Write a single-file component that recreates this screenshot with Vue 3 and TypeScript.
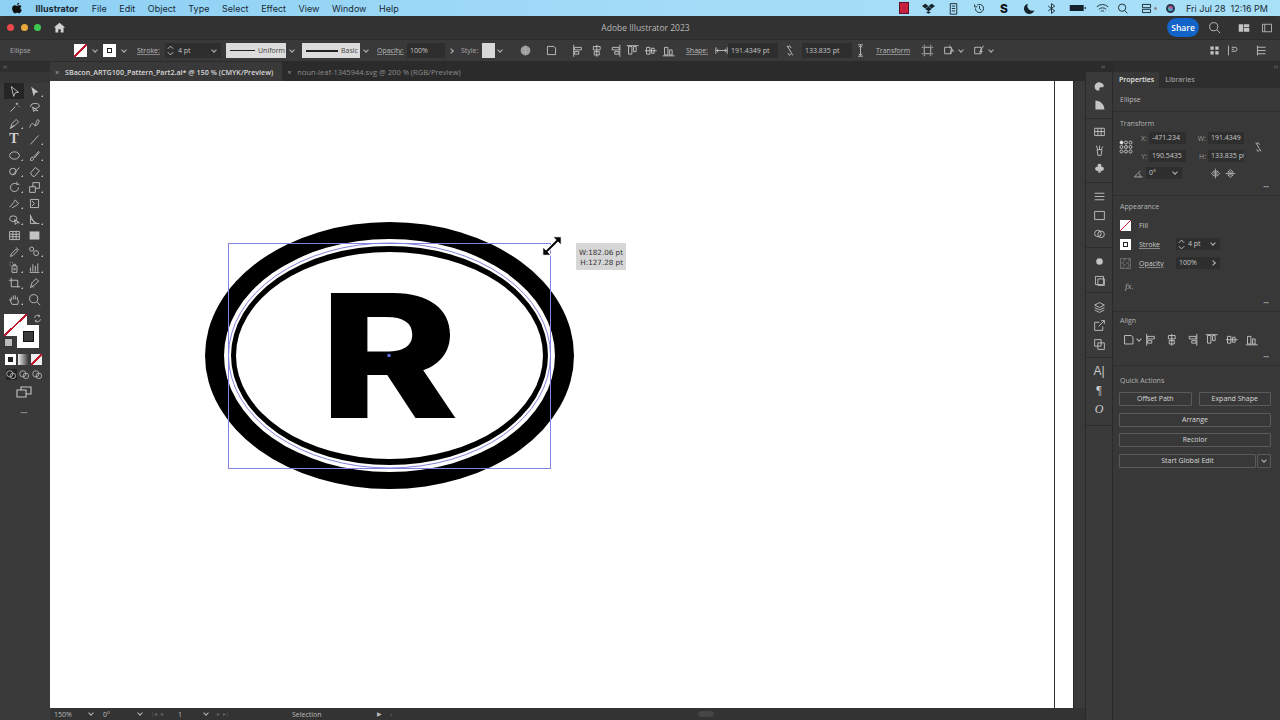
<script setup lang="ts">
interface Icon {
  d: string
  solid?: boolean
  corner?: boolean
}

const icons: Record<string, string> = {
  arrow: 'M4 2l9 7-4 .5L7 14z',
  wand: 'M3 13l6-6M11 2v3M9.5 3.5h3M13 6l1 1',
  lasso: 'M3 7c0-3 3-4 6-4s5 1 5 3-3 3-5 3-4 0-4-2M6 8l1 5 2-2 3 1z',
  pen: 'M3 14l2-6 5-5 3 3-5 5zM3 14l4-4',
  curve: 'M2 13c2-5 3-6 5-4s3 0 3-3l2-3 2 2-3 5-3 1',
  line: 'M3 14L13 3',
  ellipse: 'M2 8a6 4.5 0 1 0 12 0a6 4.5 0 1 0-12 0',
  brush: 'M3 14c0-3 1-4 3-4l1 2c0 2-2 2-4 2zM7 10l6-7 1 1-6 7',
  shaper: 'M2 8a4 4 0 1 0 8 0a4 4 0 1 0-8 0M6 12l8-9',
  eraser: 'M3 10l6-7 5 4-6 7H6z',
  rotate: 'M13 8a5 5 0 1 1-2-4M11 1v3h3',
  scale: 'M2 7h7v7H2zM6 7V2h8v7H9',
  warp: 'M2 12c2 0 2-3 4-4s1-4 3-4 1 3 3 3-1 4-3 4-2 3-4 2',
  free: 'M3 3h10v10H3zM5 5l3 3-3 3',
  shape: 'M2 7a4.500 3.500 0 1 0 9 0a4.500 3.500 0 1 0-9 0M8 8l1 6 2-2 3 0z',
  persp: 'M3 2v11h11M3 7l8 6M3 3l5 10',
  mesh: 'M2 3h12v10H2zM2 6.500h12M2 9.500h12M6 3v10M10 3v10',
  gradient: 'M2 3h12v10H2z',
  eyedrop: 'M3 14l1-3 6-6 2 2-6 6zM10 3l3 3',
  blend: 'M2 5a2.500 2.500 0 1 0 5 0a2.500 2.500 0 1 0-5 0M7 10a3 3 0 1 0 6 0a3 3 0 1 0-6 0',
  symbol: 'M5 6h6v8H5zM7 6V4h2v2M2 2h1M5 2h1M2 5h1M7 10a1 1 0 1 0 2 0a1 1 0 1 0-2 0',
  chart: 'M2 14h12M3 8v5M6 4v9M9 6v7M12 3v10',
  crop: 'M4 1v11h11M1 4h11v9',
  knife: 'M3 13l2-6 5-5 3 3-5 5zM5 11l2 2',
  hand: 'M4 9V5M6.500 8V3M9 8V3M11.500 9V5M4 9l-2-1 3 6h7l1-5',
  zoom: 'M2 7a5 5 0 1 0 10 0a5 5 0 1 0-10 0M10.500 10.500L15 15',
}

const tools: Icon[] = [
  { d: icons.arrow },
  { d: icons.arrow, solid: true, corner: true },
  { d: icons.wand },
  { d: icons.lasso },
  { d: icons.pen, corner: true },
  { d: icons.curve },
  { d: 'T' },
  { d: icons.line, corner: true },
  { d: icons.ellipse, corner: true },
  { d: icons.brush, corner: true },
  { d: icons.shaper, corner: true },
  { d: icons.eraser, corner: true },
  { d: icons.rotate, corner: true },
  { d: icons.scale, corner: true },
  { d: icons.warp, corner: true },
  { d: icons.free },
  { d: icons.shape, corner: true },
  { d: icons.persp, corner: true },
  { d: icons.mesh },
  { d: icons.gradient, solid: true },
  { d: icons.eyedrop, corner: true },
  { d: icons.blend, corner: true },
  { d: icons.symbol, corner: true },
  { d: icons.chart, corner: true },
  { d: icons.crop, corner: true },
  { d: icons.knife },
  { d: icons.hand, corner: true },
  { d: icons.zoom },
]

const menus = ['File', 'Edit', 'Object', 'Type', 'Select', 'Effect', 'View', 'Window', 'Help']

const alignPaths = [
  'M2 1v14M3 4h8v3H3zM3 9h5v3H3z',
  'M8 1v14M4 3h8v4H4zM5 9h6v4H5z',
  'M14 1v14M5 4h8v3H5zM8 9h5v3H8z',
  'M1 2h14M3 3h4v9H3zM9 3h3v6H9z',
  'M1 8h14M3 4h4v8H3zM9 5h3v6H9z',
  'M1 14h14M3 4h4v9H3zM9 7h3v6H9z',
]

const dockGroups: Icon[][] = [
  [
    { d: 'M2 8c0-4 4-6 7-5s5 3 4 5-4 0-5 2 1 3-1 3-5-1-5-5z', solid: true },
    { d: 'M3 3v11h11C14 8 9 3 3 3z', solid: true },
  ],
  [
    { d: 'M2 4h12v9H2zM2 8h12M6 4v9M10 4v9' },
    { d: 'M5 7h6l-1 7H6zM6 7l-2-5M8 7V2M10 7l2-4' },
    { d: 'M8 2a2.500 2.500 0 0 1 2 4a2.500 2.500 0 1 1-1 4l1 3H6l1-3a2.500 2.500 0 1 1-1-4a2.500 2.500 0 0 1 2-4z', solid: true },
  ],
  [
    { d: 'M2 4h12M2 8h12M2 12h12' },
    { d: 'M2 3h12v10H2z' },
    { d: 'M2 8a4 4 0 1 0 8 0a4 4 0 1 0-8 0M6 9a4 4 0 1 0 8 0a4 4 0 1 0-8 0' },
  ],
  [
    { d: 'M4 8a4 4 0 1 0 8 0a4 4 0 1 0-8 0z', solid: true },
    { d: 'M3 3h10v10H3zM6 6h8v8H6z' },
  ],
  [
    { d: 'M8 2l6 3-6 3-6-3zM2 8l6 3 6-3M2 11l6 3 6-3' },
    { d: 'M2 4h6M2 4v10h10V9M7 9l7-7M10 2h4v4' },
    { d: 'M2 2h8v8H2zM6 6h8v8H6z' },
  ],
]

const dockText = [
  { label: 'A|', cls: 'dock-a' },
  { label: '¶', cls: 'dock-p' },
  { label: 'O', cls: 'dock-o' },
]

// 3x3 reference point grid on the Transform section
const refDots = [0, 1, 2, 3, 4, 5, 6, 7, 8].map((n) => ({
  cx: 2.5 + (n % 3) * 4.5,
  cy: 2.5 + Math.floor(n / 3) * 4.5,
  on: n === 0,
}))
</script>

<template>
  <div class="app">
    <header class="menubar">
      <svg class="apple" viewBox="0 0 16 16"><path d="M11 1c0 2-1.500 3-3 3 0-2 1.500-3 3-3zM8 5c1 0 2-1 3.500-.8 1 .1 2 .6 2.500 1.500-2 1.200-1.800 4 .4 5-.6 1.800-2 4.300-3.400 4.300-1 0-1.500-.7-2.700-.7s-1.700.7-2.700.7C3.500 15 1.500 11 1.500 8.500 1.500 5.800 3.300 4.200 5 4.200 6.200 4.200 7 5 8 5z" /></svg>
      <strong class="app-name">Illustrator</strong>
      <span v-for="m in menus" :key="m" class="menu">{{ m }}</span>
      <div class="status-icons">
        <i class="red-app"></i>
        <svg viewBox="0 0 16 16"><path class="k" d="M4 2l4 3-4 3-4-3zM12 2l4 3-4 3-4-3zM4 8.500l4 3 4-3-4-3zM5 12.500l3 2 3-2-3-1z" /></svg>
        <svg viewBox="0 0 16 16"><path class="ks" d="M4 2h8v13H4zM6 5h4M6 8h4M6 11h4" /></svg>
        <svg viewBox="0 0 16 16"><path class="ks" d="M3 8a5 5 0 1 0 2-4M8 5v3l2 2M2 3v3h3" /></svg>
        <b class="s-glyph">S</b>
        <svg viewBox="0 0 16 16"><path class="k" d="M6 2a6.500 6.500 0 1 0 8 8A6 6 0 0 1 6 2z" /></svg>
        <svg class="bt" viewBox="0 0 16 16"><path class="ks" d="M4 5l8 6-4 3V2l4 3-8 6" /></svg>
        <svg class="wide" viewBox="0 0 22 12"><path class="k" d="M1 2h18v8H1zM20 5h2v2h-2z" /></svg>
        <svg class="wifi" viewBox="0 0 16 16"><path class="ks" d="M1 6a10 10 0 0 1 14 0M3.500 9a6.500 6.500 0 0 1 9 0M6 11.500a3 3 0 0 1 4 0" /></svg>
        <svg class="find" viewBox="0 0 16 16"><path class="ks" d="M3 7a4.500 4.500 0 1 0 9 0a4.500 4.500 0 1 0-9 0M10.500 10.500L14 14" /></svg>
        <svg class="ctl" viewBox="0 0 16 16"><path class="ks" d="M3 3h10v4H3zM3 9h10v4H3z" /></svg>
        <i class="dot"></i>
        <i class="siri"></i>
        <span class="clock">Fri Jul 28&nbsp; 12:16 PM</span>
      </div>
    </header>

    <div class="titlebar">
      <i class="light l-red"></i>
      <i class="light l-yellow"></i>
      <i class="light l-green"></i>
      <svg class="home" viewBox="0 0 16 16"><path d="M8 2l7 6h-2v6H9.500v-4h-3v4H3V8H1z" /></svg>
      <span class="title">Adobe Illustrator 2023</span>
      <span class="share">Share</span>
      <svg class="tb-icon search" viewBox="0 0 16 16"><path d="M2 7a5 5 0 1 0 10 0a5 5 0 1 0-10 0M10.500 10.500L15 15" /></svg>
      <svg class="tb-icon layout" viewBox="0 0 16 16"><path class="filled" d="M1 3h6v10H1zM8 3h7v4H8zM8 8h7v5H8z" /></svg>
      <svg class="tb-icon last" viewBox="0 0 16 16"><path d="M2 3h12v10H2zM5 3v10" /></svg>
    </div>

    <div class="controlbar">
      <span class="lbl ell">Ellipse</span>
      <i class="swatch none"></i><span class="chev"></span>
      <i class="swatch stroke-sw"><u></u></i><span class="chev"></span>
      <span class="lbl ul stroke-lbl">Stroke:</span>
      <span class="field stroke-field">
        <svg class="spin" viewBox="0 0 8 12"><path d="M1 4l3-3 3 3M1 8l3 3 3-3" /></svg>4 pt<span class="chev end"></span>
      </span>
      <span class="line-pick uniform"><i></i>Uniform</span><span class="chev"></span>
      <span class="line-pick basic"><i class="thick"></i>Basic</span><span class="chev"></span>
      <span class="lbl ul op-lbl">Opacity:</span>
      <span class="field op-field">100%</span>
      <span class="chev gt"></span>
      <span class="lbl style-lbl">Style:</span>
      <i class="style-sw"></i><span class="chev"></span>
      <svg class="ci globe" viewBox="0 0 16 16"><circle cx="8" cy="8" r="6" fill="#9a9a9a" /><path d="M3 6h10M3 10h10M8 2v12" stroke-dasharray="1 1" /></svg>
      <svg class="ci artboard" viewBox="0 0 16 16"><path d="M3 3h8l2 2v8H3z" /></svg>
      <svg v-for="(p, i) in alignPaths" :key="i" class="ci al" viewBox="0 0 16 16"><path :d="p" /></svg>
      <span class="lbl ul shape-lbl">Shape:</span>
      <svg class="ci wh" viewBox="0 0 16 16"><path d="M1 4v8M15 4v8M2 8h12M4 6L2 8l2 2M12 6l2 2-2 2" /></svg>
      <span class="field dim-field">191.4349 pt</span>
      <svg class="ci link" viewBox="0 0 16 16"><path d="M5 2l7 12M6 4l2-2 2 3M10 12l-2 2-2-3" /></svg>
      <span class="field dim-field">133.835 pt</span>
      <svg class="ci hh" viewBox="0 0 16 16"><path d="M5 1h6M5 15h6M8 2v12M6 4l2-2 2 2M6 12l2 2 2-2" /></svg>
      <span class="lbl ul tf-lbl">Transform</span>
      <svg class="ci t1" viewBox="0 0 16 16"><path d="M4 4h8v8H4zM1 4h2M1 12h2M13 4h2M13 12h2M4 1v2M12 1v2M4 13v2M12 13v2" /></svg>
      <svg class="ci t2" viewBox="0 0 16 16"><path d="M2 4h8v8H2zM8 2l5 7-3-1-1 4" /></svg>
      <span class="chev"></span>
      <svg class="ci t3" viewBox="0 0 16 16"><path d="M2 4h8v8H2zM13 2l-5 8 4-1" /></svg>
      <span class="chev"></span>
      <svg class="ci r1" viewBox="0 0 16 16"><path class="filled" d="M3 3h4v4H3zM9 3h4v4H9zM3 9h4v4H3zM9 9h4v4H9z" /></svg>
      <svg class="ci r2" viewBox="0 0 16 16"><path d="M3 2v12M7 4h4a2.500 2.500 0 0 1 0 5H7M7 6.500h3" /></svg>
      <svg class="ci r3" viewBox="0 0 16 16"><path d="M3 4h10M3 8h10M3 12h10M3 2v12" /></svg>
    </div>

    <main class="workspace">
      <aside class="toolbar">
        <div class="collapse">‹‹</div>
        <div class="grip"></div>
        <div class="tool-grid">
          <div v-for="(t, i) in tools" :key="i" class="tool" :class="{ active: i === 0 }">
            <span v-if="t.d === 'T'" class="tool-t">T</span>
            <svg v-else viewBox="0 0 16 16"><path :d="t.d" :class="{ filled: t.solid }" /></svg>
            <i v-if="t.corner" class="corner"></i>
          </div>
        </div>
        <div class="fill-stroke">
          <i class="big-fill"></i>
          <i class="big-stroke"><u></u></i>
          <svg class="swap" viewBox="0 0 12 12"><path d="M2 5a4 4 0 0 1 7-2M8 1l1 2-2 1M10 7a4 4 0 0 1-7 2M4 11L3 9l2-1" /></svg>
          <i class="mini-default"></i>
        </div>
        <div class="mode-row">
          <i class="mode m-solid"></i><i class="mode m-grad"></i><i class="mode m-none"></i>
        </div>
        <div class="draw-row">
          <svg v-for="n in 3" :key="n" class="draw" :class="{ sel: n === 1 }" viewBox="0 0 16 16"><path d="M1 7a4.500 4.500 0 1 0 9 0a4.500 4.500 0 1 0-9 0M6 10a4 4 0 1 0 8 0a4 4 0 1 0-8 0" /></svg>
        </div>
        <svg class="screen" viewBox="0 0 16 16"><path d="M1 6h9v7H1zM5 6V3h10v7h-5" /></svg>
        <div class="more">•••</div>
      </aside>

      <section class="center">
        <nav class="tabs">
          <div class="tab on"><span class="x">×</span>SBacon_ARTG100_Pattern_Part2.ai* @ 150 % (CMYK/Preview)</div>
          <div class="tab"><span class="x">×</span>noun-leaf-1345944.svg @ 200 % (RGB/Preview)</div>
        </nav>
        <div class="canvas-row">
          <div class="canvas">
            <svg class="art" viewBox="50 81 1023 627" width="1023" height="627">
              <line x1="1054.500" y1="81" x2="1054.500" y2="708" stroke="#333" />
              <ellipse cx="389.500" cy="355.500" rx="184.500" ry="133.500" fill="#000" />
              <ellipse cx="389.500" cy="355.500" rx="165.500" ry="116.500" fill="#fff" />
              <ellipse cx="389.500" cy="355.500" rx="158.500" ry="109.500" fill="#000" />
              <ellipse cx="389.500" cy="355.500" rx="153.500" ry="103.500" fill="#fff" />
              <text x="319" y="418" class="big-r" textLength="140" lengthAdjust="spacingAndGlyphs">R</text>
              <ellipse cx="389.500" cy="355.500" rx="161" ry="112.500" fill="none" stroke="#8282dc" />
              <rect x="228.500" y="243.500" width="322" height="225" fill="none" stroke="#8282e0" />
              <circle cx="389" cy="355.500" r="1.800" fill="#5a6ee0" />
              <g transform="translate(552 246) rotate(-45)">
                <path class="cursor" d="M-13 0l6-6v4.500H7V-6l6 6-6 6V1.500H-7V6z" />
              </g>
            </svg>
            <div class="measure">W:182.06 pt<br />H:127.28 pt</div>
          </div>
          <div class="vscroll"></div>
        </div>
        <footer class="statusbar">
          <span class="st zoom">150%</span><span class="chev"></span>
          <span class="st angle">0°</span><span class="chev"></span>
          <span class="st nav nav1">|◂ &nbsp;◂</span>
          <span class="st page">1</span><span class="chev"></span>
          <span class="st nav nav2">▸ &nbsp;▸|</span>
          <span class="st mode-name">Selection</span>
          <span class="st play">▶</span>
          <span class="st back">‹</span>
          <i class="hthumb"></i>
        </footer>
      </section>

      <aside class="dock">
        <div class="dock-top">‹‹</div>
        <div v-for="(g, i) in dockGroups" :key="i" class="dock-group">
          <svg v-for="(ic, j) in g" :key="j" viewBox="0 0 16 16"><path :d="ic.d" :class="{ filled: ic.solid }" /></svg>
        </div>
        <div class="dock-group texts">
          <span v-for="t in dockText" :key="t.label" :class="t.cls">{{ t.label }}</span>
        </div>
      </aside>

      <aside class="panel">
        <div class="panel-tabs">
          <span class="ptab on">Properties</span>
          <span class="ptab">Libraries</span>
          <span class="pcollapse">››</span>
        </div>
        <div class="sec kind">Ellipse</div>

        <section class="sec transform">
          <h4>Transform</h4>
          <div class="tf-main">
            <svg class="refpoint" viewBox="0 0 14 14">
              <circle v-for="(c, i) in refDots" :key="i" :cx="c.cx" :cy="c.cy" r="1.500" :fill="c.on ? '#eee' : 'none'" stroke="#d8d8d8" stroke-width=".8" />
            </svg>
            <div class="tf-grid">
              <label>X:</label><span class="inp">-471.234</span>
              <label>W:</label><span class="inp">191.4349</span>
              <label>Y:</label><span class="inp">190.5435</span>
              <label>H:</label><span class="inp">133.835 pt</span>
            </div>
            <svg class="plink" viewBox="0 0 16 16"><path d="M5 2l7 12M6 4l2-2 2 3M10 12l-2 2-2-3" /></svg>
          </div>
          <div class="angle-row">
            <svg viewBox="0 0 16 16"><path d="M2 13h12M2 13L11 4M9 8a5 5 0 0 1 1 5" /></svg>
            <span class="inp angle-inp">0°<b class="chev end"></b></span>
            <svg class="flip" viewBox="0 0 16 16"><path d="M8 1v14M6 4l-4 4 4 4zM10 4l4 4-4 4z" /></svg>
            <svg class="flip2" viewBox="0 0 16 16"><path d="M1 8h14M4 6l4-4 4 4zM4 10l4 4 4-4z" /></svg>
          </div>
          <div class="dots">•••</div>
        </section>

        <section class="sec appearance">
          <h4>Appearance</h4>
          <div class="ap-row"><i class="pswatch none"></i><span>Fill</span></div>
          <div class="ap-row">
            <i class="pswatch stroke-sw"><u></u></i><span class="ul ap-lbl">Stroke</span>
            <span class="inp st-inp">
              <svg class="spin" viewBox="0 0 8 12"><path d="M1 4l3-3 3 3M1 8l3 3 3-3" /></svg>4 pt<b class="chev end"></b>
            </span>
          </div>
          <div class="ap-row">
            <i class="pswatch check"></i><span class="ul ap-lbl">Opacity</span>
            <span class="inp op-inp">100%<b class="chev end gt"></b></span>
          </div>
          <div class="fx">fx.</div>
          <div class="dots">•••</div>
        </section>

        <section class="sec align">
          <h4>Align</h4>
          <div class="align-row">
            <svg class="art-ic" viewBox="0 0 16 16"><path d="M3 3h8l2 2v8H3z" /></svg>
            <span class="chev tiny"></span>
            <svg v-for="(p, i) in alignPaths" :key="i" viewBox="0 0 16 16"><path :d="p" /></svg>
          </div>
          <div class="dots">•••</div>
        </section>

        <section class="sec quick">
          <h4>Quick Actions</h4>
          <div class="btn-grid">
            <span class="btn">Offset Path</span>
            <span class="btn">Expand Shape</span>
            <span class="btn span2">Arrange</span>
            <span class="btn span2">Recolor</span>
            <div class="span2 split">
              <span class="btn grow">Start Global Edit</span>
              <span class="btn caret"><b class="chev"></b></span>
            </div>
          </div>
        </section>
      </aside>
    </main>
  </div>
</template>

<style>
html, body { margin: 0; background: #333; }
</style>

<style scoped>
.app {
  width: 1280px;
  height: 720px;
  overflow: hidden;
  display: flex;
  flex-direction: column;
  background: #383838;
  color: #c8c8c8;
  font-family: "Open Sans", "Liberation Sans", sans-serif;
  font-size: 7px;
}
i, em { display: block; font-style: normal; }
svg { display: block; }
svg path { fill: none; stroke: #c4c4c4; stroke-width: 1.1; }
svg path.filled { fill: #c4c4c4; stroke: none; }

/* mac menu bar */
.menubar {
  height: 16px;
  flex: none;
  display: flex;
  align-items: center;
  gap: 12.600px;
  padding-left: 11px;
  background: linear-gradient(90deg, #8ed0f4, #a4dcf8 55%, #a8e0f8);
  color: #1a2a34;
  font-family: Inter, "Liberation Sans", sans-serif;
  font-size: 9px;
}
.apple { width: 12px; height: 12px; }
.apple path { fill: #111; stroke: none; }
.app-name { font-size: 9px; font-weight: 700; margin-right: 1px; }
.status-icons {
  margin-left: auto;
  display: flex;
  align-items: center;
  gap: 12.500px;
  padding-right: 12px;
}
.status-icons svg { width: 13px; height: 13px; }
.status-icons svg.wide { width: 17px; height: 10px; margin: 0 -2px; }
.status-icons path.k { fill: #16222a; stroke: none; }
.status-icons path.ks { stroke: #16222a; }
.status-icons .bt { margin-left: -3px; }
.status-icons .find { margin-left: -6px; }
.status-icons .ctl { margin-left: -1.500px; }
.red-app { width: 10px; height: 12px; background: #c8203c; border: 1px solid #5a1020; box-sizing: border-box; }
.s-glyph { font-size: 12px; font-weight: 800; color: #111; width: 12px; text-align: center; }
.dot { width: 3px; height: 3px; border-radius: 50%; background: #888; margin-left: -11.500px; }
.siri { width: 9px; height: 9px; border-radius: 50%; background: conic-gradient(#e0457a, #5a8ae6, #43c6c6, #e0457a); border: 2px solid #26384a; box-sizing: border-box; margin-left: -3.500px; }
.clock { font-size: 9px; margin-left: -1px; white-space: nowrap; }

/* app title */
.titlebar {
  height: 24px;
  flex: none;
  display: flex;
  align-items: center;
  background: #323232;
  border-radius: 5px 5px 0 0;
  padding-left: 7px;
  border-bottom: 1px solid #2a2a2a;
  box-sizing: border-box;
}
.light { width: 7px; height: 7px; border-radius: 50%; margin-right: 6.500px; }
.l-red { background: #e8484a; }
.l-yellow { background: #e8a83c; }
.l-green { background: #3cc850; }
.home { width: 13px; height: 13px; margin-left: 5px; }
.home path { fill: #d0d0d0; stroke: none; }
.title {
  margin-left: 530px;
  width: 100px;
  text-align: center;
  font-size: 8.500px;
  color: #b8b8b8;
  white-space: nowrap;
}
.share {
  margin-left: 471.500px;
  width: 32px;
  height: 19px;
  line-height: 19px;
  text-align: center;
  border-radius: 10px;
  background: #1264c8;
  color: #fff;
  font-size: 8.500px;
  font-weight: 600;
}
.tb-icon { width: 12px; height: 12px; }
.tb-icon.search { width: 13px; height: 13px; margin-left: 8.500px; }
.tb-icon.layout { margin-left: 17.500px; }
.tb-icon.last { margin-left: 11px; }

/* control bar */
.controlbar {
  height: 22px;
  flex: none;
  display: flex;
  align-items: center;
  background: #393939;
  border-bottom: 1px solid #2b2b2b;
  box-sizing: border-box;
  white-space: nowrap;
}
.lbl { color: #bdbdbd; flex: none; }
.ul { text-decoration: underline; text-decoration-color: #888; text-underline-offset: 1px; }
.ell { margin-left: 10px; width: 64px; color: #a8a8a8; }
.chev { display: flex; align-items: center; justify-content: center; width: 10px; height: 8px; flex: none; }
.chev::before {
  content: "";
  display: block;
  width: 3px;
  height: 3px;
  margin-top: -2px;
  border-right: 1px solid #b8b8b8;
  border-bottom: 1px solid #b8b8b8;
  transform: rotate(45deg);
}
.chev.gt::before { transform: rotate(-45deg); margin-top: 0; }
.chev.end { position: absolute; right: 2px; top: 2px; }
.swatch { width: 13px; height: 13px; background: #fff; margin-right: 3px; flex: none; position: relative; }
.swatch.none, .pswatch.none { background: linear-gradient(to top left, #fff 46%, #c01830 46%, #c01830 54%, #fff 54%); }
.swatch.stroke-sw { margin-left: 3px; }
.stroke-sw { display: flex; align-items: center; justify-content: center; }
.stroke-sw u { display: block; width: 3px; height: 3px; border: 1px solid #222; }
.stroke-lbl { margin-left: 8px; width: 28px; }
.field { background: #2e2e2e; height: 15px; line-height: 15px; color: #c4c4c4; position: relative; flex: none; box-sizing: border-box; display: flex; align-items: center; }
.field .chev.end { top: 4px; }
.spin { width: 7px; height: 11px; margin-right: 4px; flex: none; }
.stroke-field { width: 56px; padding-left: 2px; }
.line-pick {
  background: #dcdcdc;
  color: #444;
  height: 15px;
  margin-left: 5px;
  display: flex;
  align-items: center;
  gap: 3px;
  padding-left: 4px;
  box-sizing: border-box;
  flex: none;
}
.line-pick i { width: 25px; height: 1px; background: #222; }
.line-pick i.thick { height: 2px; width: 32px; }
.uniform { width: 60px; margin-right: 1px; }
.basic { width: 58px; margin-right: 1px; }
.op-lbl { margin-left: 6px; width: 30px; }
.op-field { width: 38px; padding-left: 3px; }
.gt { margin-left: 1px; }
.style-lbl { margin-left: 5px; width: 21px; color: #a8a8a8; }
.style-sw { width: 13px; height: 15px; background: #d8d8d8; flex: none; }
.ci { width: 13px; height: 13px; flex: none; }
.globe { margin-left: 13.500px; }
.artboard { margin-left: 13px; margin-right: 9.500px; }
.al { margin-left: 4.500px; width: 13.500px; height: 13.500px; }
.shape-lbl { margin-left: 11px; width: 29px; }
.dim-field { width: 50px; padding-left: 3px; }
.link { margin: 0 6.500px 0 4.500px; }
.hh { margin-left: 1.500px; }
.tf-lbl { margin-left: 9.500px; width: 44.500px; }
.t1 { margin-right: 9px; }
.t3 { margin-left: 7px; }
.r1 { margin-left: 212px; }
.r2 { margin-left: 5px; }
.r3 { margin-left: 16px; }

/* main */
.workspace { flex: 1; display: flex; min-height: 0; }
.toolbar {
  width: 50px;
  flex: none;
  background: #3a3a3a;
  display: flex;
  flex-direction: column;
  align-items: center;
}
.collapse { height: 10px; line-height: 10px; width: 100%; padding-left: 3px; box-sizing: border-box; font-size: 7px; color: #888; background: #2e2e2e; }
.grip { height: 11px; width: 100%; background: #363636; }
.tool-grid { display: grid; grid-template-columns: 20px 20px; grid-auto-rows: 16px; margin-right: 2px; }
.tool { position: relative; display: flex; align-items: center; justify-content: center; }
.tool svg { width: 13px; height: 13px; }
.tool.active { background: #252525; }
.tool-t { font-family: "Liberation Serif", serif; font-size: 14px; font-weight: 700; color: #d0d0d0; }
.corner { position: absolute; right: 1px; bottom: 2px; width: 0; height: 0; border-left: 2px solid transparent; border-bottom: 2px solid #c4c4c4; }
.fill-stroke { position: relative; width: 40px; height: 38px; margin-top: 5px; align-self: flex-start; }
.big-fill { position: absolute; left: 4px; top: 2px; width: 23px; height: 22px; background: linear-gradient(to top left, #fff 47%, #c01830 47%, #c01830 53%, #fff 53%); }
.big-stroke { position: absolute; left: 17px; top: 13px; width: 22px; height: 23px; background: #fff; display: flex; align-items: center; justify-content: center; }
.big-stroke u { display: block; width: 9px; height: 9px; border: 1px solid #111; background: #3a3a3a; }
.swap { position: absolute; left: 33px; top: 2px; width: 9px; height: 9px; }
.mini-default { position: absolute; left: 4px; top: 26px; width: 7px; height: 7px; background: #bbb; border: 1px solid #333; }
.mode-row { display: flex; gap: 2px; margin-top: 4px; margin-right: 3px; }
.mode { width: 11px; height: 11px; }
.m-solid { background: #fff; border: 3px solid #fff; box-shadow: inset 0 0 0 3px #222; box-sizing: border-box; }
.m-grad { background: linear-gradient(90deg, #eee, #333); }
.m-none { background: linear-gradient(to top left, #eee 44%, #c01830 44%, #c01830 56%, #eee 56%); }
.draw-row { display: flex; gap: 2px; margin-top: 4px; margin-right: 2px; }
.draw { width: 11px; height: 11px; }
.draw.sel { background: #252525; }
.screen { width: 16px; height: 16px; margin-top: 4px; margin-right: 2px; }
.more { font-size: 6px; color: #bbb; margin-top: 9px; margin-right: 2px; }

.center { flex: 1; min-width: 0; display: flex; flex-direction: column; }
.tabs { height: 19px; flex: none; display: flex; background: #2b2b2b; }
.tab {
  display: flex;
  align-items: center;
  font-size: 7.550px;
  color: #8c8c8c;
  padding-right: 9px;
  white-space: nowrap;
}
.tab.on { background: #393939; color: #d8d8d8; font-weight: 600; font-size: 7.150px; }
.x { width: 15px; padding-left: 5px; box-sizing: border-box; color: #999; }
.canvas-row { flex: 1; display: flex; min-height: 0; }
.canvas { width: 1023px; background: #fff; position: relative; overflow: hidden; }
.art { position: absolute; left: 0; top: 0; }
.cursor { fill: #000; stroke: #fff; stroke-width: 1; }
.big-r { font-family: Inter, "Liberation Sans", sans-serif; font-size: 172px; font-weight: 800; fill: #000; }
.measure {
  position: absolute;
  left: 526px;
  top: 162px;
  width: 50px;
  height: 27px;
  box-sizing: border-box;
  padding: 5px 3px 0 0;
  background: #d6d6d6;
  border-radius: 1px;
  color: #333;
  text-align: right;
  font-family: "DejaVu Sans", sans-serif;
  font-size: 7.200px;
  line-height: 10px;
  white-space: nowrap;
}
.vscroll { flex: 1; background: #3a3a3a; border-left: 1px solid #2a2a2a; }
.statusbar {
  height: 12px;
  flex: none;
  display: flex;
  align-items: center;
  background: #333;
  color: #bbb;
  position: relative;
}
.st { flex: none; }
.zoom { margin-left: 4px; width: 32px; }
.angle { margin-left: 7px; width: 32px; }
.nav { color: #666; font-size: 6px; }
.nav1 { width: 25px; margin-left: 6px; }
.nav2 { width: 20px; margin-left: 6px; }
.page { width: 23px; margin-left: 2px; }
.mode-name { margin-left: 55px; width: 85px; }
.play { font-size: 6px; width: 6px; }
.back { margin-left: 7px; color: #777; }
.hthumb { position: absolute; left: 648px; top: 3px; width: 16px; height: 6px; border-radius: 3px; background: #454545; }

/* right dock */
.dock { width: 27px; flex: none; background: #3a3a3a; border-left: 1px solid #2a2a2a; box-sizing: border-box; }
.dock-top { height: 10px; line-height: 10px; font-size: 7px; color: #888; padding-left: 15px; background: #2b2b2b; }
.dock-group { display: flex; flex-direction: column; align-items: center; gap: 5.500px; padding: 7.500px 0 6.500px; border-bottom: 1px solid #2c2c2c; }
.dock-group svg { width: 13px; height: 13px; }
.dock-group:nth-child(3) { padding-top: 6.500px; }
.dock-group:nth-child(5) { padding-bottom: 5.500px; }
.texts { font-family: "Liberation Serif", serif; font-size: 12px; color: #ccc; gap: 2px; line-height: 17px; padding-top: 5px; }
.dock-a { font-family: "Liberation Sans", sans-serif; }
.dock-o { font-style: italic; }

/* properties panel */
.panel { width: 168px; flex: none; background: #383838; border-left: 1px solid #2a2a2a; box-sizing: border-box; }
.panel-tabs { height: 26px; background: #2e2e2e; display: flex; align-items: flex-end; position: relative; }
.ptab { height: 16px; line-height: 15px; padding: 0 6px; color: #999; font-weight: 600; font-size: 7px; }
.ptab.on { background: #383838; color: #e4e4e4; padding: 0 5px 0 6px; }
.pcollapse { position: absolute; right: 2px; top: 0; line-height: 9px; color: #888; }
.sec { padding: 0 10px 0 7px; border-bottom: 1px solid #2e2e2e; position: relative; }
.kind { height: 23px; line-height: 23px; color: #bbb; font-size: 7px; }
h4 { margin: 0; font-size: 7px; line-height: 10px; font-weight: 400; color: #b4b4b4; }
.transform { height: 84px; padding-top: 7px; box-sizing: border-box; }
.tf-main { display: flex; align-items: center; margin-top: 3px; margin-left: -1px; }
.refpoint { width: 14px; height: 14px; flex: none; }
.tf-grid {
  display: grid;
  grid-template-columns: 16px 37px 22px 36px;
  grid-auto-rows: 12px;
  row-gap: 6px;
  align-items: center;
}
.tf-grid label { text-align: right; padding-right: 2px; color: #999; }
.inp { background: #2e2e2e; height: 12px; line-height: 12px; color: #c8c8c8; display: block; position: relative; padding-left: 3px; box-sizing: border-box; white-space: nowrap; overflow: hidden; }
.plink { width: 12px; height: 14px; margin-left: 8px; flex: none; }
.angle-row { display: flex; align-items: center; margin-top: 5px; padding-left: 13px; }
.angle-row svg { width: 11px; height: 11px; flex: none; }
.angle-inp { width: 36px; margin-left: 2px; }
.angle-row .flip { margin-left: 28px; }
.angle-row .flip2 { margin-left: 4px; }
.dots { position: absolute; right: 11px; bottom: 5px; font-size: 5px; line-height: 5px; color: #ccc; }
.appearance { height: 116px; padding-top: 6px; box-sizing: border-box; }
.ap-row { display: flex; align-items: center; height: 19px; gap: 8px; }
.ap-row:first-of-type { margin-top: 3.500px; }
.pswatch { width: 11px; height: 11px; background: #fff; flex: none; }
.ap-lbl { width: 29px; font-size: 7px; }
.st-inp { width: 44px; padding-left: 2px; display: flex; align-items: center; }
.st-inp .spin { margin-right: 3px; }
.op-inp { width: 44px; }
.check { background: repeating-conic-gradient(#555 0 25%, #3a3a3a 0 50%) 0 0 / 5px 5px; border: 1px solid #666; box-sizing: border-box; }
.fx { font-family: "Liberation Serif", serif; font-style: italic; font-size: 9px; color: #aaa; margin: 8.500px 0 0 5px; }
.align { height: 54px; padding-top: 4px; box-sizing: border-box; }
.align-row { display: flex; align-items: center; margin-top: 7px; gap: 6.500px; padding-left: 2px; }
.align-row svg { width: 13.500px; height: 13.500px; flex: none; }
.align-row .tiny { width: 5px; margin-left: -6px; margin-right: -3px; }
.quick { border-bottom: 0; padding-top: 10px; padding-right: 9px; }
.btn-grid { display: grid; grid-template-columns: 1fr 1fr; gap: 6.500px 7px; margin: 6px 0 0 -1px; }
.btn {
  height: 14px;
  line-height: 12px;
  text-align: center;
  border: 1px solid #5a5a5a;
  box-sizing: border-box;
  border-radius: 1px;
  color: #d8d8d8;
  font-size: 7px;
  display: block;
}
.span2 { grid-column: 1 / span 2; }
.split { display: flex; gap: 1px; }
.grow { flex: 1; }
.caret { width: 14px; flex: none; display: flex; align-items: center; justify-content: center; }
</style>
